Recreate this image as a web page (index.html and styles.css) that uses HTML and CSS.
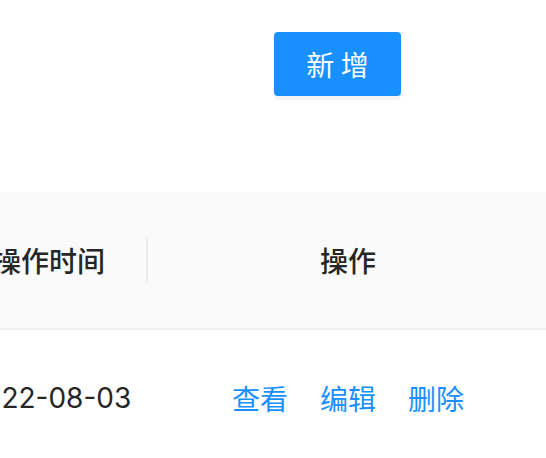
FILE: index.html
```html
<!DOCTYPE html>
<html lang="zh-CN">
<head>
<meta charset="utf-8">
<link rel="stylesheet" href="styles.css">
</head>
<body>
<div class="page">
  <div class="toolbar">
    <button class="btn-primary">新 增</button>
  </div>
  <div class="table">
    <div class="row head">
      <div class="cell col-time">操作时间<span class="sep"></span></div>
      <div class="cell col-op">操作</div>
    </div>
    <div class="row body">
      <div class="cell col-time date">2022-08-03</div>
      <div class="cell col-op">
        <div class="actions">
          <a class="link">查看</a>
          <a class="link">编辑</a>
          <a class="link">删除</a>
        </div>
      </div>
    </div>
  </div>
</div>
</body>
</html>
```
FILE: styles.css
```css
html, body {
  margin: 0;
  padding: 0;
  background: #fff;
}
body {
  width: 546px;
  height: 458px;
  overflow: hidden;
  font-family: Inter, "Noto Sans CJK SC", sans-serif;
  font-size: 28px;
  color: rgba(0, 0, 0, 0.85);
}
.page {
  padding-top: 32px;
}
.toolbar {
  display: flex;
  padding-left: 274px;
  height: 68px;
  align-items: flex-start;
}
.btn-primary {
  width: 127px;
  height: 64px;
  border: none;
  border-radius: 4px;
  background: #1890ff;
  color: #fff;
  font-family: "Noto Sans CJK SC", sans-serif;
  font-size: 28px;
  line-height: 1;
  padding: 0;
  box-shadow: 0 4px 0 rgba(0, 0, 0, 0.045);
}
.table {
  margin-top: 92px;
  margin-left: -50px;
  width: 598px;
}
.row {
  display: flex;
  height: 136px;
  align-items: center;
}
.head {
  background: #fafafa;
  border-bottom: 2px solid #f0f0f0;
  font-weight: 500;
  font-family: "Noto Sans CJK SC", sans-serif;
  color: #262626;
}
.cell {
  position: relative;
  display: flex;
  align-items: center;
  justify-content: center;
  height: 100%;
}
.col-time {
  width: 198px;
}
.col-op {
  width: 400px;
}
.sep {
  position: absolute;
  right: 0;
  top: 45px;
  width: 2px;
  height: 46px;
  background: #ececec;
}
.date {
  color: #262626;
}
.actions {
  display: flex;
  gap: 32px;
}
.link {
  color: #1890ff;
  font-family: "Noto Sans CJK SC", sans-serif;
}
```
